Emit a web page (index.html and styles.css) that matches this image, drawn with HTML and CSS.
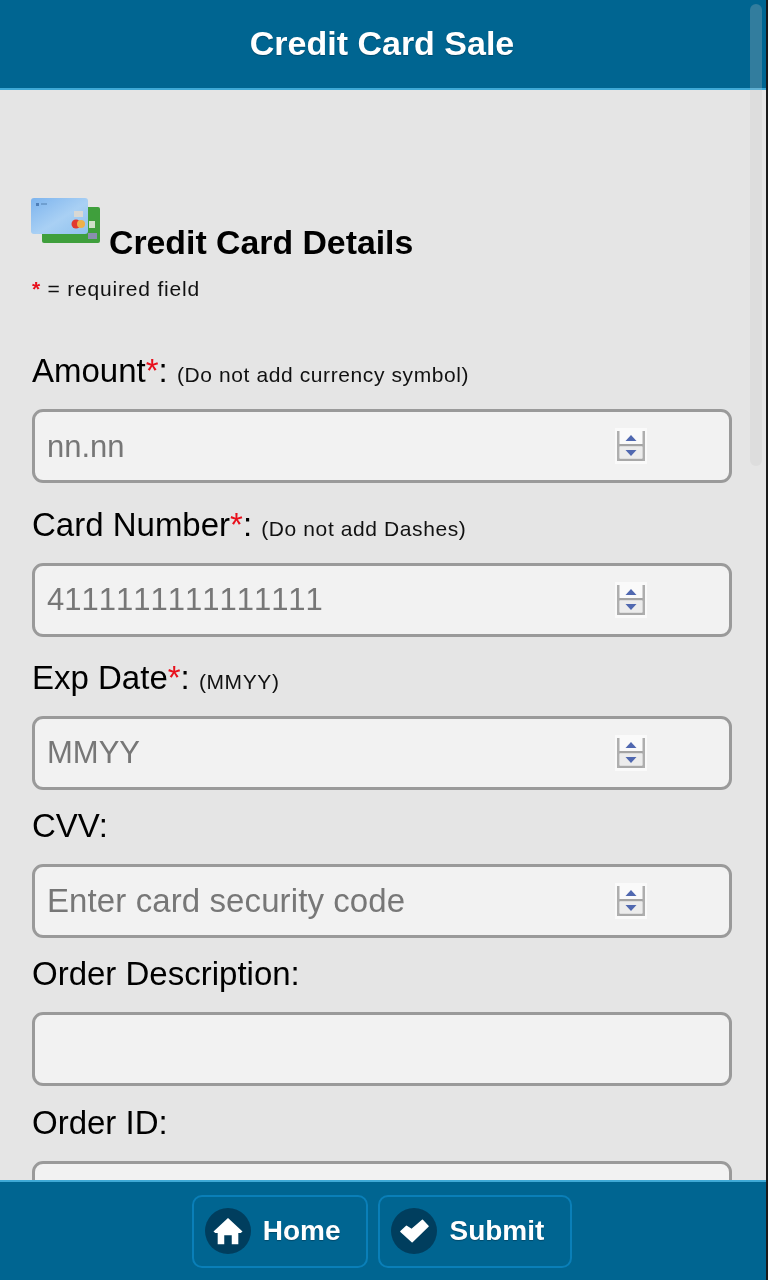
FILE: index.html
```html
<!DOCTYPE html>
<html lang="en">
<head>
<meta charset="utf-8">
<title>Credit Card Sale</title>
<link rel="stylesheet" href="styles.css">
</head>
<body>
<svg class="defs" width="0" height="0" aria-hidden="true">
  <defs>
    <symbol id="spin" viewBox="0 0 32 36">
      <rect width="32" height="36" fill="#fafafa"/>
      <rect x="3" y="16" width="26" height="2.500" fill="#a4a4a4"/>
      <rect x="3" y="30.500" width="26" height="2.500" fill="#a8a8a8"/>
      <rect x="2" y="3" width="2.500" height="30" fill="#aeaeae"/>
      <rect x="27.500" y="3" width="2.500" height="30" fill="#aeaeae"/>
      <rect x="5" y="18.500" width="22" height="12" fill="#ececec"/>
      <path d="M10.500 13h11L16 7z" fill="#5068b0"/>
      <path d="M10.500 22h11L16 28z" fill="#5068b0"/>
    </symbol>
  </defs>
</svg>
<div class="page">
  <header class="topbar"><h1>Credit Card Sale</h1></header>
  <main class="content">
    <h2 class="section">
      <svg class="cards" viewBox="0 0 70 50" width="70" height="50" aria-hidden="true">
        <defs>
          <linearGradient id="blue" x1="0" y1="0" x2="1" y2="1">
            <stop offset="0" stop-color="#7db4ee"/>
            <stop offset="0.55" stop-color="#a9d0f4"/>
            <stop offset="1" stop-color="#8fc2ee"/>
          </linearGradient>
        </defs>
        <rect x="11" y="10" width="58" height="36" rx="2" fill="#3f9f3c"/>
        <rect x="57" y="36" width="9" height="6" fill="#8a8fb0"/>
        <rect x="58" y="24" width="6" height="7" fill="#cfe0c8"/>
        <rect x="0" y="1" width="57" height="36" rx="3" fill="url(#blue)"/>
        <rect x="5" y="6" width="3" height="3" fill="#4f7fb8"/>
        <rect x="10" y="6" width="6" height="2" fill="#6f9fd0"/>
        <rect x="43" y="14" width="9" height="6" fill="#d8d8d4"/>
        <circle cx="45" cy="27" r="4.500" fill="#e0392f"/>
        <circle cx="50" cy="27" r="4" fill="#eeb04a"/>
      </svg>
      <span class="section-text">Credit Card Details</span>
    </h2>
    <p class="legend"><span class="req">*</span> = required field</p>
    <div class="group first">
      <div class="label tall">Amount<span class="req">*</span>: <small>(Do not add currency symbol)</small></div>
      <div class="field"><span class="ph">nn.nn</span><svg class="spinner"><use href="#spin"/></svg></div>
    </div>
    <div class="group">
      <div class="label tall">Card Number<span class="req">*</span>: <small>(Do not add Dashes)</small></div>
      <div class="field"><span class="ph">4111111111111111</span><svg class="spinner"><use href="#spin"/></svg></div>
    </div>
    <div class="group">
      <div class="label tall">Exp Date<span class="req">*</span>: <small>(MMYY)</small></div>
      <div class="field"><span class="ph">MMYY</span><svg class="spinner"><use href="#spin"/></svg></div>
    </div>
    <div class="group">
      <div class="label">CVV:</div>
      <div class="field"><span class="ph large">Enter card security code</span><svg class="spinner"><use href="#spin"/></svg></div>
    </div>
    <div class="group">
      <div class="label">Order Description:</div>
      <div class="field"></div>
    </div>
    <div class="group">
      <div class="label">Order ID:</div>
      <div class="field"></div>
    </div>
  </main>
  <footer class="bottombar">
    <a class="btn">
      <span class="disc">
        <svg viewBox="0 0 32 32" width="30" height="30" aria-hidden="true"><path d="M16 2 .5 16.500 2.500 18H5v12h7v-9.500h8V30h7V18h2.500l2-1.500z" fill="#fff"/></svg>
      </span>
      <span>Home</span>
    </a>
    <a class="btn">
      <span class="disc">
        <svg viewBox="0 0 32 32" width="30" height="30" aria-hidden="true"><path d="M2 16.500 8 11 13.500 14.500 25 4.500 31 11 14 27.500z" fill="#fff" stroke="#fff" stroke-width="1.500" stroke-linejoin="round"/></svg>
      </span>
      <span>Submit</span>
    </a>
  </footer>
  <div class="thumb"></div>
</div>
</body>
</html>
```
FILE: styles.css
```css
html, body { margin: 0; padding: 0; }
body { font-family: "Liberation Sans", Arial, sans-serif; background: #e5e5e5; }
.defs { position: absolute; }
.page {
  position: relative;
  width: 766px;
  height: 1280px;
  overflow: hidden;
  background: #e5e5e5;
  border-right: 2px solid #1a1a1a;
  box-sizing: content-box;
  filter: blur(0.5px);
}
.topbar {
  height: 86px;
  padding: 0 2px 2px 0;
  background: #006591;
  border-bottom: 2px solid #3fa9d6;
  display: flex;
  align-items: center;
  justify-content: center;
}
.topbar h1 {
  margin: 0;
  font-size: 34px;
  font-weight: 700;
  color: #fff;
  text-shadow: 0 1px 1px #004a6b;
}
.content { padding: 107px 34px 0 32px; }
.section {
  margin: 0;
  display: flex;
  align-items: flex-end;
  height: 64px;
  font-size: 33.800px;
  line-height: 36px;
  color: #000;
}
.cards { display: block; margin: 0 8px 14px -1px; flex: none; }
.section-text { margin-bottom: 1px; }
.legend {
  margin: 16px 0 0;
  font-size: 21px;
  letter-spacing: 0.8px;
  line-height: 24px;
  color: #111;
}
.legend .req { font-weight: 700; }
.req { color: #e8101c; }
.group { margin-top: 17.300px; }
.group.first { margin-top: 46.500px; }
.label {
  font-size: 33px;
  line-height: 38px;
  color: #000;
  margin-bottom: 19px;
}
.label.tall { padding-top: 4.900px; }
.label small { font-size: 21px; line-height: 1; letter-spacing: 0.6px; color: #111; }
.field {
  height: 74px;
  box-sizing: border-box;
  border: 3px solid #9a9a9a;
  border-radius: 11px;
  background: #f2f2f2;
  display: flex;
  align-items: center;
  justify-content: space-between;
  padding: 0 82px 0 12px;
}
.ph { font-size: 31px; font-kerning: none; color: #777; padding-top: 1px; }
.ph.large { font-size: 33px; letter-spacing: 0.1px; font-kerning: normal; padding-top: 0; }
.spinner { width: 32px; height: 36px; display: block; margin-left: auto; }
.bottombar {
  position: absolute;
  left: 0;
  right: 0;
  bottom: 0;
  height: 98px;
  background: #006591;
  border-top: 2px solid #3fa9d6;
  display: flex;
  justify-content: center;
  align-items: center;
  gap: 10px;
  padding-right: 2px;
  box-sizing: content-box;
}
.btn {
  height: 73px;
  box-sizing: border-box;
  display: flex;
  align-items: center;
  gap: 12px;
  padding: 0 26px 0 11px;
  border: 2px solid #0a7fb8;
  border-radius: 10px;
  color: #fff;
  font-size: 28px;
  font-weight: 700;
  text-shadow: 0 1px 1px #004a6b;
}
.disc {
  width: 46px;
  height: 46px;
  border-radius: 50%;
  background: #003e5e;
  display: flex;
  align-items: center;
  justify-content: center;
}
.thumb {
  position: absolute;
  top: 4px;
  right: 4px;
  width: 12px;
  height: 462px;
  border-radius: 6px;
  background: rgba(200, 200, 200, 0.25);
}
```
